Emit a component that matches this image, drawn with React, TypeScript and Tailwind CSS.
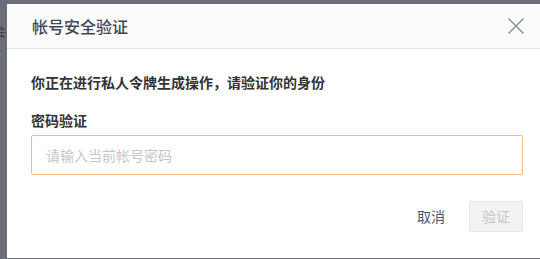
import { useEffect, useRef } from 'react'

function CloseIcon() {
  return (
    <svg width="16" height="16" viewBox="0 0 16 16" fill="none" stroke="#7b909c" strokeWidth="1.4" strokeLinecap="square">
      <path d="M1 1L15 15M15 1L1 15" />
    </svg>
  )
}

export default function App() {
  const inputRef = useRef<HTMLInputElement>(null)

  useEffect(() => {
    inputRef.current?.focus()
  }, [])

  return (
    <div
      className="relative w-[540px] h-[259px] overflow-hidden bg-[#6b6e78] pt-[4px] pl-[7px]"
      style={{ fontFamily: '"Noto Sans CJK SC", "Noto Sans", sans-serif' }}
    >
      {/* page behind the overlay */}
      <span className="absolute left-[-8px] top-[20px] text-[14px] text-[#3e4048]">会</span>

      <div className="w-[540px] h-[254px] bg-white flex flex-col">
        {/* Header */}
        <div className="h-[45px] shrink-0 flex items-center justify-between pl-[25px] pr-[23px] bg-[#fbfbfc] border-b border-[#e2e8ef]">
          <h2 className="text-[16px] font-medium text-[#3f4859] leading-none">帐号安全验证</h2>
          <button className="p-0 leading-none">
            <CloseIcon />
          </button>
        </div>

        {/* Body */}
        <div className="px-[24px] pt-[23px]">
          <p className="text-[14px] leading-[20px] font-bold text-[#333]">
            你正在进行私人令牌生成操作，请验证你的身份
          </p>
          <label className="block mt-[18px] text-[14px] leading-[20px] font-bold text-[#333]">
            密码验证
          </label>
          <input
            ref={inputRef}
            type="password"
            placeholder="请输入当前帐号密码"
            className="mt-[5px] w-[492px] h-[40px] px-[14px] rounded-[2px] border border-[#ffb76f] text-[14px] text-[#333] placeholder-[#c6c6c6] outline-none caret-black"
          />
        </div>

        {/* Footer */}
        <div className="flex items-center justify-end gap-[24px] px-[24px] mt-[26px]">
          <button className="text-[14px] text-[#3f5a6c]">取消</button>
          <button
            disabled
            className="w-[54px] h-[31px] rounded-[2px] bg-[#f3f3f3] border border-[#e4e4e4] text-[14px] text-[#c6c6c6]"
          >
            验证
          </button>
        </div>
      </div>
    </div>
  )
}
